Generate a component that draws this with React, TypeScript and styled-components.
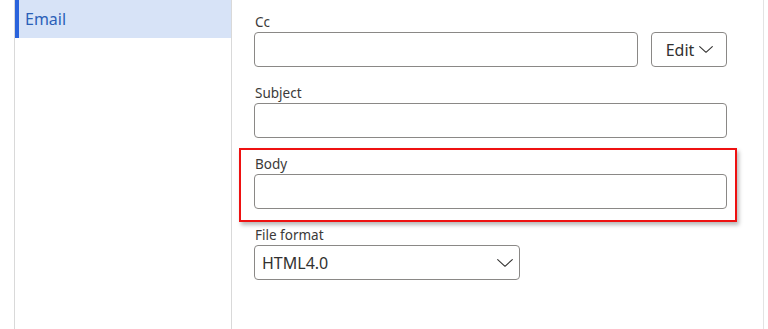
import React from 'react';
import styled, { createGlobalStyle } from 'styled-components';

const Global = createGlobalStyle`
  html, body { margin: 0; padding: 0; background: #ffffff; }
  body { font-family: "Noto Sans", "Open Sans", sans-serif; color: #323130; }
  * { box-sizing: border-box; }
`;

const Page = styled.div`
  display: flex;
  height: 329px;
  padding: 0 4px 0 14px;
  overflow: hidden;
`;

const Nav = styled.nav`
  width: 218px;
  flex-shrink: 0;
  border-left: 1px solid #d9d9d9;
  border-right: 1px solid #d9d9d9;
`;

const NavItem = styled.div<{ $active?: boolean }>`
  height: 38px;
  display: flex;
  align-items: center;
  padding-left: 6px;
  padding-bottom: 1px;
  font-size: 16px;
  color: ${(p) => (p.$active ? '#2b5fb8' : '#323130')};
  background: ${(p) => (p.$active ? '#d7e3f7' : 'transparent')};
  border-left: 4px solid ${(p) => (p.$active ? '#2a63dc' : 'transparent')};
`;

const Content = styled.main`
  flex: 1;
  border-right: 1px solid #e3e3e3;
  padding: 12px 36px 0 22px;
  display: flex;
  flex-direction: column;
  gap: 16px;
`;

const Field = styled.div<{ $highlight?: boolean }>`
  position: relative;
  display: flex;
  flex-direction: column;
  ${(p) =>
    p.$highlight &&
    `
    &::after {
      content: "";
      position: absolute;
      top: -6px;
      left: -15px;
      right: -10px;
      bottom: -13px;
      border: 2px solid #ee1111;
      box-shadow: 2px 3px 4px rgba(0, 0, 0, 0.28);
      pointer-events: none;
    }
  `}
`;

const Label = styled.label`
  font-size: 13.5px;
  line-height: 20px;
  height: 20px;
  color: #3b3a39;
  padding-left: 1px;
`;

const Row = styled.div`
  display: flex;
  gap: 13px;
`;

const TextBox = styled.div<{ $grow?: boolean }>`
  height: 35px;
  flex: ${(p) => (p.$grow ? '1 1 auto' : '0 0 auto')};
  border: 1px solid #8a8886;
  border-radius: 4px;
  background: #fff;
`;

const EditButton = styled.button`
  width: 76px;
  height: 35px;
  flex-shrink: 0;
  border: 1px solid #8a8886;
  border-radius: 4px;
  background: #fff;
  display: flex;
  align-items: center;
  justify-content: center;
  gap: 5px;
  padding: 0 0 0 1px;
  font-family: "Noto Sans", sans-serif;
  font-size: 16px;
  color: #323130;
`;

const Select = styled.div`
  width: 266px;
  height: 35px;
  border: 1px solid #8a8886;
  border-radius: 4px;
  display: flex;
  align-items: center;
  justify-content: space-between;
  padding: 0 6px 0 7px;
  font-size: 16px;
  color: #323130;
`;

const Chevron = ({ w, h }: { w: number; h: number }) => (
  <svg width={w} height={h} viewBox={`0 0 ${w} ${h}`} fill="none">
    <path
      d={`M0.7 0.7 L${w / 2} ${h - 0.7} L${w - 0.7} 0.7`}
      stroke="#323130"
      strokeWidth="1.1"
      strokeLinecap="round"
      strokeLinejoin="round"
    />
  </svg>
);

export default function App() {
  return (
    <>
      <Global />
      <Page>
        <Nav>
          <NavItem $active>Email</NavItem>
        </Nav>
        <Content>
          <Field>
            <Label>Cc</Label>
            <Row>
              <TextBox $grow />
              <EditButton>
                Edit
                <Chevron w={14} h={7} />
              </EditButton>
            </Row>
          </Field>
          <Field>
            <Label>Subject</Label>
            <TextBox />
          </Field>
          <Field $highlight>
            <Label>Body</Label>
            <TextBox />
          </Field>
          <Field>
            <Label>File format</Label>
            <Select>
              <span>HTML4.0</span>
              <Chevron w={16} h={8} />
            </Select>
          </Field>
        </Content>
      </Page>
    </>
  );
}
